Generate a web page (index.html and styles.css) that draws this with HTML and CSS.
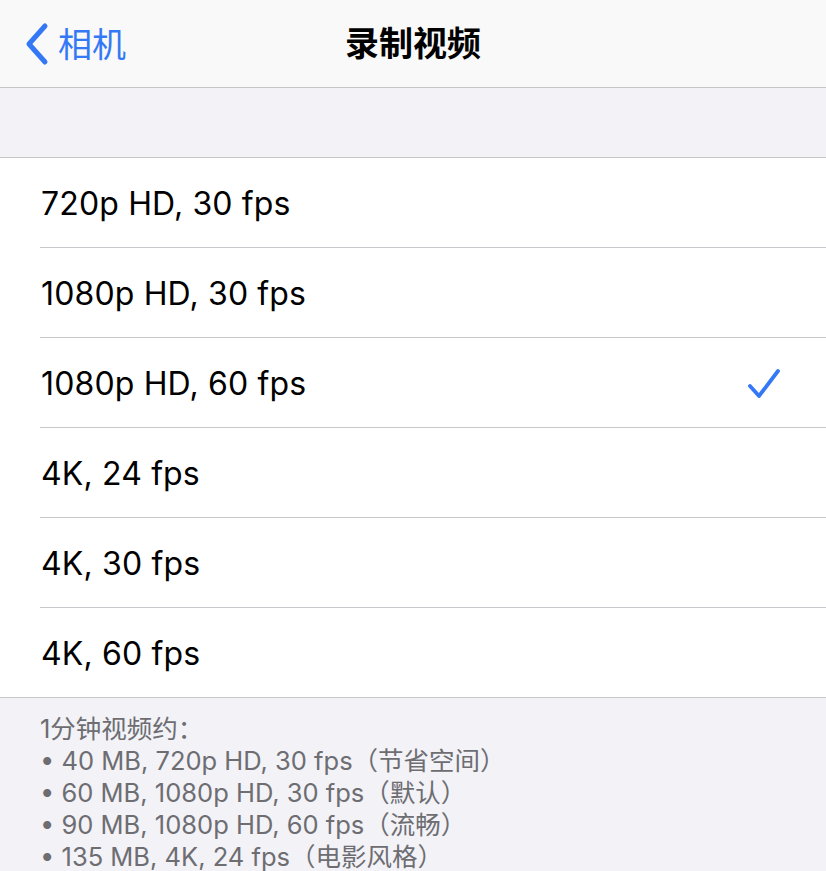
FILE: index.html
```html
<!DOCTYPE html>
<html lang="zh-CN">
<head>
<meta charset="utf-8">
<title>录制视频</title>
<link rel="stylesheet" href="styles.css">
</head>
<body>
<header class="navbar">
  <a class="back" href="#">
    <svg class="chevron" viewBox="0 0 26 44" width="26" height="44"><path d="M21 4 L5 22 L21 40" fill="none" stroke="#3478f6" stroke-width="5" stroke-linecap="round" stroke-linejoin="round"/></svg>
    <span>相机</span>
  </a>
  <h1 class="title">录制视频</h1>
</header>
<div class="spacer"></div>
<ul class="list">
  <li class="row"><span>720p HD, 30 fps</span></li>
  <li class="row"><span>1080p HD, 30 fps</span></li>
  <li class="row"><span>1080p HD, 60 fps</span>
    <svg class="check" viewBox="0 0 34 32" width="34" height="32"><path d="M3 18 L12 28 L31 3" fill="none" stroke="#3478f6" stroke-width="3.8" stroke-linecap="round" stroke-linejoin="round"/></svg>
  </li>
  <li class="row"><span>4K, 24 fps</span></li>
  <li class="row"><span>4K, 30 fps</span></li>
  <li class="row"><span>4K, 60 fps</span></li>
</ul>
<footer class="note">
  <p>1分钟视频约：</p>
  <p>• 40 MB, 720p HD, 30 fps（节省空间）</p>
  <p>• 60 MB, 1080p HD, 30 fps（默认）</p>
  <p>• 90 MB, 1080p HD, 60 fps（流畅）</p>
  <p>• 135 MB, 4K, 24 fps（电影风格）</p>
</footer>
</body>
</html>
```
FILE: styles.css
```css
html, body {
  margin: 0;
  padding: 0;
  background: #f2f2f7;
  font-family: Inter, "Noto Sans CJK SC", sans-serif;
  overflow: hidden;
}

.navbar {
  height: 87px;
  background: #f9f9f9;
  border-bottom: 1px solid #c6c6c8;
  display: flex;
  align-items: center;
  justify-content: center;
  position: relative;
}

.back {
  position: absolute;
  left: 24px;
  top: 0;
  height: 87px;
  display: flex;
  align-items: center;
  gap: 8px;
  color: #3478f6;
  text-decoration: none;
  font-size: 34px;
}

.back span {
  margin-top: -2px;
}

.title {
  margin: 0;
  font-size: 34px;
  font-weight: 700;
  color: #000;
  margin-top: -4px;
}

.spacer {
  height: 69px;
  border-bottom: 1px solid #c6c6c8;
}

.list {
  list-style: none;
  margin: 0;
  padding: 0 0 0 40px;
  background: #fff;
  border-bottom: 1px solid #c6c6c8;
}

.row {
  height: 89px;
  display: flex;
  align-items: center;
  justify-content: space-between;
  padding-right: 45px;
  font-size: 32px;
  letter-spacing: 0.15px;
  color: #000;
  border-bottom: 1px solid #c8c7cc;
}

.row:last-child {
  border-bottom: none;
}

.row span {
  margin-left: 1px;
  margin-top: 2px;
}

.check {
  margin-top: 2px;
}

.note {
  padding: 15px 0 0 40px;
  color: #6d6d72;
  font-size: 25.5px;
  line-height: 32px;
}

.note p {
  margin: 0;
  white-space: nowrap;
}
```
